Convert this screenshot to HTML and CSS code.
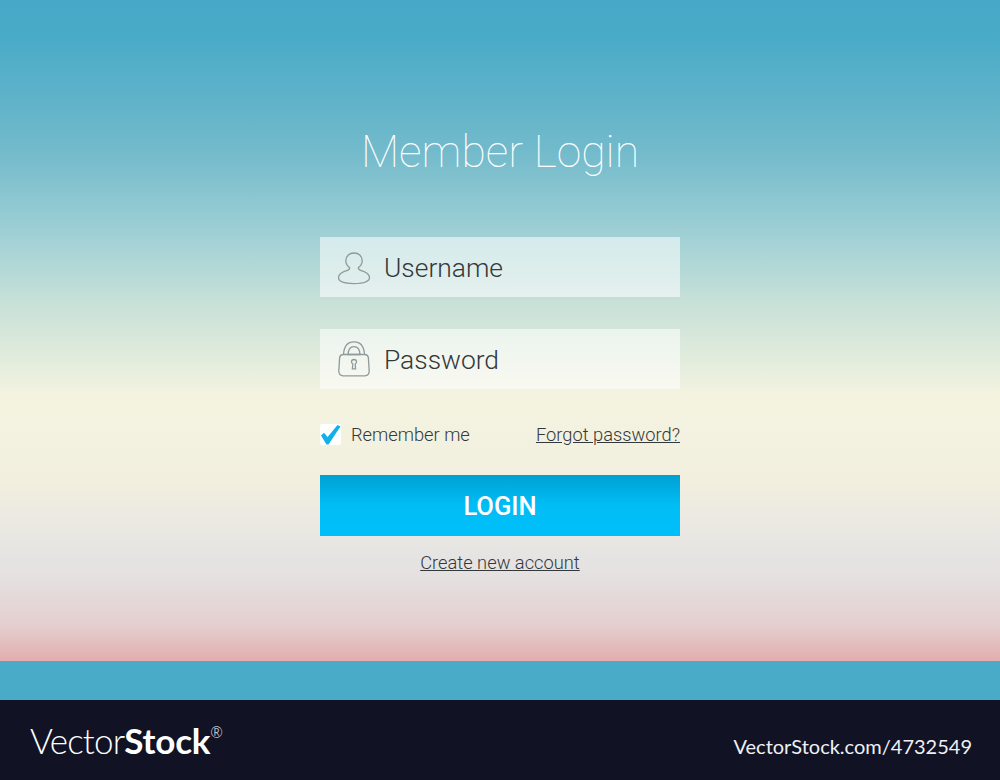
FILE: index.html
```html
<!DOCTYPE html>
<html lang="en">
<head>
    <meta charset="UTF-8">
    <title>Member Login</title>
    <link rel="stylesheet" href="styles.css">
</head>
<body>
    <div class="poster">
        <div class="login">
            <h1>Member Login</h1>
            <div class="field field-user">
                <svg class="field-icon" width="34" height="36" viewBox="0 0 34 36" fill="none" stroke="#8f9a9a" stroke-width="1.3">
                    <path d="M17 4c-5 0-8.200 3.300-8.200 7.600 0 3.200 1.500 5.500 3.800 7 .2 1.600-.8 2.400-3 3.100C4.800 23.300 1.500 25 1.500 28.600c0 3.900 5.700 6 15.500 6s15.500-2.100 15.500-6c0-3.600-3.300-5.300-8.100-6.900-2.200-.7-3.200-1.500-3-3.100 2.300-1.500 3.800-3.800 3.800-7C25.200 7.300 22 4 17 4z"/>
                </svg>
                <span>Username</span>
            </div>
            <div class="field field-pass">
                <svg class="field-icon" width="34" height="36" viewBox="0 0 34 36" fill="none" stroke="#8f9a9a" stroke-width="1.3">
                    <path d="M6.500 13.500C7 5 11 .8 17 .8S27 5 27.500 13.500"/>
                    <path d="M11 13.500c.3-5.200 2.500-7.800 6-7.800s5.700 2.600 6 7.800z"/>
                    <path d="M6.500 13.500h21c2.200 0 3.700 1.500 3.900 3.600l.8 13c0 2.900-1.600 4.700-4.300 4.700H6.100c-2.700 0-4.300-1.800-4.300-4.700l.8-13c.2-2.100 1.700-3.600 3.900-3.600z"/>
                    <path d="M17 18.500c-1.500 0-2.500 1-2.500 2.300 0 1 .5 1.700 1.300 2.200l-.4 4.800h3.200l-.4-4.800c.8-.5 1.300-1.200 1.300-2.200 0-1.300-1-2.300-2.500-2.300z"/>
                </svg>
                <span>Password</span>
            </div>
            <div class="options">
                <label class="remember">
                    <span class="checkbox">
                        <svg width="22" height="22" viewBox="0 0 22 22"><path d="M1 11.500l3-2.700 3.600 4.200L17.500 1l3 1.500L8.500 20.500h-2z" fill="#12b0ea"/></svg>
                    </span>
                    Remember me
                </label>
                <a class="link" href="#">Forgot password?</a>
            </div>
            <button class="login-btn">LOGIN</button>
            <a class="link link-create" href="#">Create new account</a>
        </div>
    </div>
    <div class="stripe"></div>
    <div class="footer">
        <div class="logo">Vector<b>Stock</b><sup>®</sup></div>
        <div class="stock-id">VectorStock.com/4732549</div>
    </div>
</body>
</html>
```

FILE: styles.css
```css
body {
    margin: 0;
    font-family: Roboto, "Liberation Sans", sans-serif;
    color: #33383a;
}
.poster {
    height: 661px;
    display: flex;
    justify-content: center;
    background: linear-gradient(to bottom,
        #47a9c7 0,
        #4aabc8 40px,
        #72bacb 150px,
        #a0d0d5 235px,
        #c6e0d8 300px,
        #dbe9db 345px,
        #f4f3e0 395px,
        #f2efdf 480px,
        #e6e5e3 550px,
        #e5e1e1 575px,
        #e4cfd0 625px,
        #e3adad 661px);
}
.login {
    width: 360px;
    display: flex;
    flex-direction: column;
    padding-top: 121px;
}
h1 {
    margin: 0 0 54px;
    height: 62px;
    line-height: 62px;
    font-size: 44.5px;
    font-weight: 100;
    color: #fff;
    text-align: center;
}
.field {
    height: 60px;
    display: flex;
    align-items: center;
    gap: 13px;
    padding-left: 17px;
    font-size: 26.400px;
    font-weight: 300;
    background: rgba(255, 255, 255, 0.55);
}
.field span {
    padding-top: 1px;
}
.field-user {
    margin-bottom: 32px;
}
.options {
    display: flex;
    justify-content: space-between;
    align-items: center;
    margin: 34px 0 30px;
    height: 22px;
    font-size: 18.300px;
}
.remember {
    display: flex;
    align-items: center;
    gap: 10px;
    font-weight: 300;
}
.checkbox {
    width: 21px;
    height: 21px;
    background: #fff;
    border-radius: 2px;
}
.link {
    color: #33383a;
    font-weight: 300;
    font-size: 18.300px;
}
.login-btn {
    height: 61px;
    border: none;
    color: #fff;
    font-family: inherit;
    font-size: 25.500px;
    font-weight: 500;
    background: linear-gradient(to bottom, #00a1d2 0, #00bdf6 50%, #00bff8 100%);
}
.link-create {
    align-self: center;
    margin-top: 16px;
}
.stripe {
    height: 39px;
    background: #4aabc8;
}
.footer {
    height: 80px;
    display: flex;
    justify-content: space-between;
    align-items: center;
    padding: 0 28px 0 30px;
    background: #111325;
    color: #fff;
}
.logo {
    font-family: "Lato", sans-serif;
    font-size: 35px;
    font-weight: 300;
    letter-spacing: -0.8px;
}
.logo b {
    font-weight: 700;
    letter-spacing: -0.2px;
}
.logo sup {
    font-size: 15px;
    font-weight: 300;
    vertical-align: 16px;
    line-height: 0;
}
.stock-id {
    font-family: "Lato", sans-serif;
    font-size: 20px;
    color: #f0f0f4;
    padding-top: 11px;
}
```
